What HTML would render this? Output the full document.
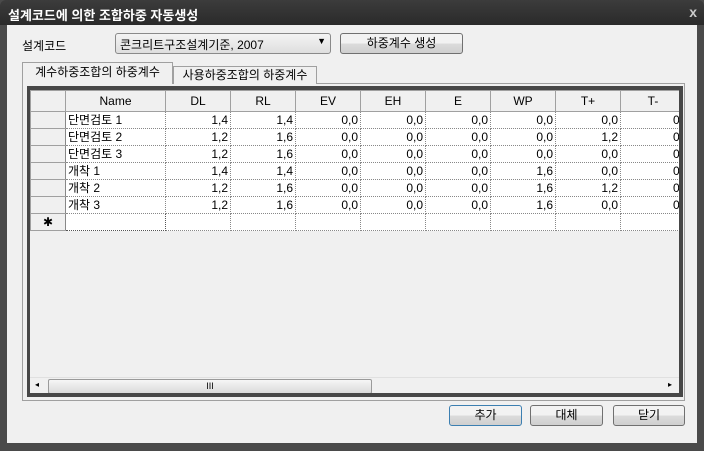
<!DOCTYPE html>
<html><head><meta charset="utf-8"><style>
*{margin:0;padding:0;box-sizing:border-box}
body{width:704px;height:451px;background:#4a4a4a;font-family:"Liberation Sans","Noto Sans CJK KR","NanumGothic",sans-serif;font-size:12px;color:#000;position:relative;overflow:hidden}
.abs{position:absolute}
#title{left:0;top:0;width:704px;height:25px;background:linear-gradient(#3c3c3c,#2a2a2a);color:#fff;font-weight:bold;font-size:13px;padding:5px 0 0 8px;border-radius:6px 6px 0 0}
#client{left:7px;top:25px;width:690px;height:418px;background:#f0f0f0}
.btn{border:1px solid #707070;border-radius:3px;background:linear-gradient(#f2f2f2 50%,#dcdcdc 50%,#cfcfcf);text-align:center;line-height:18px}
table{border-collapse:collapse;table-layout:fixed;background:#fff}
td{height:17px;line-height:15px;border-right:1px dotted #888;border-bottom:1px dotted #888;text-align:right;padding:0 2px;font-size:12px;white-space:nowrap;overflow:hidden}
td.h{background:#f0f0f0;border:1px solid #a0a0a0;text-align:center;height:21px;line-height:18px}
td.r{background:#f0f0f0;border:1px solid #a0a0a0;border-right:1px solid #888}
td.n{text-align:left}
</style></head><body>
<div id="title" class="abs">설계코드에 의한 조합하중 자동생성</div>
<div class="abs" style="right:7px;top:4px;color:#ccc;font-weight:bold;font-size:14px">x</div>
<div id="client" class="abs"></div>
<div class="abs" style="left:22px;top:37px">설계코드</div>
<div class="abs" style="left:115px;top:33px;width:216px;height:21px;border:1px solid #8a8a8a;border-radius:3px;background:linear-gradient(#f4f4f4,#dedede);padding:2px 4px">콘크리트구조설계기준, 2007<span style="position:absolute;right:4px;top:2px;font-size:9px">▼</span></div>
<div class="abs btn" style="left:340px;top:33px;width:123px;height:21px">하중계수 생성</div>
<div class="abs" style="left:22px;top:83px;width:663px;height:318px;border:1px solid #a0a0a0;background:#f0f0f0"></div>
<div class="abs" style="left:173px;top:66px;width:144px;height:18px;border:1px solid #a0a0a0;border-bottom:none;background:#f0f0f0;text-align:center;line-height:16px">사용하중조합의 하중계수</div>
<div class="abs" style="left:22px;top:62px;width:151px;height:22px;border:1px solid #a0a0a0;border-bottom:none;background:#f0f0f0;text-align:center;line-height:19px">계수하중조합의 하중계수</div>
<div class="abs" style="left:27px;top:86px;width:656px;height:311px;border:4px solid #474747;border-left-width:3px;background:#f0f0f0;overflow:hidden">
<table style="width:650px">
<colgroup><col style="width:35px"><col style="width:100px"><col style="width:65px"><col style="width:65px"><col style="width:65px"><col style="width:65px"><col style="width:65px"><col style="width:65px"><col style="width:65px"><col style="width:65px"></colgroup>
<tr><td class="h"></td><td class="h">Name</td><td class="h">DL</td><td class="h">RL</td><td class="h">EV</td><td class="h">EH</td><td class="h">E</td><td class="h">WP</td><td class="h">T+</td><td class="h">T-</td></tr>
<tr><td class="r"></td><td class="n">단면검토 1</td><td>1,4</td><td>1,4</td><td>0,0</td><td>0,0</td><td>0,0</td><td>0,0</td><td>0,0</td><td>0,</td></tr>
<tr><td class="r"></td><td class="n">단면검토 2</td><td>1,2</td><td>1,6</td><td>0,0</td><td>0,0</td><td>0,0</td><td>0,0</td><td>1,2</td><td>0,</td></tr>
<tr><td class="r"></td><td class="n">단면검토 3</td><td>1,2</td><td>1,6</td><td>0,0</td><td>0,0</td><td>0,0</td><td>0,0</td><td>0,0</td><td>0,</td></tr>
<tr><td class="r"></td><td class="n">개착 1</td><td>1,4</td><td>1,4</td><td>0,0</td><td>0,0</td><td>0,0</td><td>1,6</td><td>0,0</td><td>0,</td></tr>
<tr><td class="r"></td><td class="n">개착 2</td><td>1,2</td><td>1,6</td><td>0,0</td><td>0,0</td><td>0,0</td><td>1,6</td><td>1,2</td><td>0,</td></tr>
<tr><td class="r"></td><td class="n">개착 3</td><td>1,2</td><td>1,6</td><td>0,0</td><td>0,0</td><td>0,0</td><td>1,6</td><td>0,0</td><td>0,</td></tr>
<tr><td class="r" style="text-align:center">✱</td><td style="border:1px dotted #555"></td><td></td><td></td><td></td><td></td><td></td><td></td><td></td><td></td></tr>
</table>
<div class="abs" style="left:0;top:287px;width:650px;height:17px;background:#f0f0f0;border-top:1px solid #e0e0e0">
<span class="abs" style="left:5px;top:2px;font-size:8px">◂</span>
<div class="abs" style="left:18px;top:1px;width:324px;height:15px;border:1px solid #9a9a9a;border-radius:2px;background:linear-gradient(#f6f6f6,#dadada);text-align:center;font-size:9px;line-height:13px">III</div>
<span class="abs" style="left:638px;top:2px;font-size:8px">▸</span>
</div>
</div>
<div class="abs btn" style="left:449px;top:405px;width:73px;height:21px;border-color:#3c7fb1">추가</div>
<div class="abs btn" style="left:530px;top:405px;width:73px;height:21px">대체</div>
<div class="abs btn" style="left:613px;top:405px;width:72px;height:21px">닫기</div>
</body></html>
